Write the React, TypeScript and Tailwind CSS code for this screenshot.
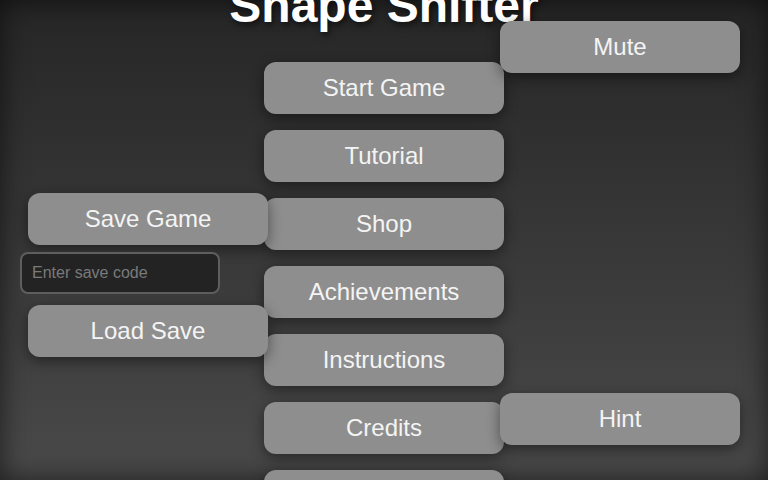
import React from 'react';

const menuItems = ['Start Game', 'Tutorial', 'Shop', 'Achievements', 'Instructions', 'Credits', 'Settings'];

function MenuButton({ label, className = '' }: { label: string; className?: string }) {
  return (
    <button
      className={`w-[240px] h-[52px] rounded-xl bg-[#8e8e8e] text-[24px] leading-none text-[#f4f4f4] shadow-[0_4px_14px_rgba(0,0,0,0.45)] ${className}`}
    >
      {label}
    </button>
  );
}

export default function App() {
  return (
    <div
      className="relative w-[768px] h-[480px] overflow-hidden bg-gradient-to-b from-[#262626] to-[#4a4a4a] shadow-[inset_0_0_28px_rgba(0,0,0,0.6)]"
      style={{ fontFamily: '"Liberation Sans", Arial, sans-serif' }}
    >
      {/* main menu column */}
      <div className="flex flex-col items-center">
        <h1 className="-mt-[22px] text-[48px] leading-[55px] font-bold text-white [text-shadow:2px_3px_6px_rgba(0,0,0,0.6)]">
          Shape Shifter
        </h1>
        <div className="mt-[29px] flex flex-col gap-4">
          {menuItems.map((item) => (
            <MenuButton key={item} label={item} />
          ))}
        </div>
      </div>

      {/* save panel */}
      <div className="absolute left-[20px] top-[193px] flex flex-col items-start">
        <MenuButton label="Save Game" className="ml-2" />
        <input
          placeholder="Enter save code"
          className="mt-[7px] w-[200px] h-[42px] rounded-lg border-2 border-[#5e5e5e] bg-[#232323] px-[10px] text-base text-white placeholder:text-[#7a7a7a] outline-none"
        />
        <MenuButton label="Load Save" className="ml-2 mt-[11px]" />
      </div>

      {/* top-right / side controls */}
      <MenuButton label="Mute" className="absolute left-[500px] top-[21px]" />
      <MenuButton label="Hint" className="absolute left-[500px] top-[393px]" />
    </div>
  );
}
